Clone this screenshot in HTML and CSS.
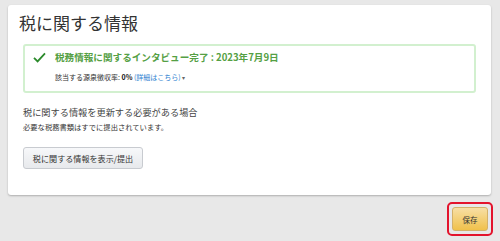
FILE: index.html
```html
<!DOCTYPE html>
<html lang="ja">
<head>
    <meta charset="UTF-8">
    <meta name="viewport" content="width=device-width, initial-scale=1.0">
    <title>税に関する情報</title>
    <link rel="stylesheet" href="styles.css">
</head>
<body>
    <main class="card">
        <h1 class="card-title">税に関する情報</h1>
        <div class="alert-success">
            <svg class="alert-icon" width="13" height="11" viewBox="0 0 13 11">
                <path d="M1 5.8 L4.6 9.4 L12 1.4" fill="none" stroke="#2b8a2b" stroke-width="1.8"/>
            </svg>
            <div class="alert-body">
                <div class="alert-heading">税務情報に関するインタビュー完了 : 2023年7月9日</div>
                <div class="alert-text">該当する源泉徴収率: <b>0%</b> <a href="#" class="link">(詳細はこちら)</a><span class="caret">▾</span></div>
            </div>
        </div>
        <p class="section-title">税に関する情報を更新する必要がある場合</p>
        <p class="section-text">必要な税務書類はすでに提出されています。</p>
        <button type="button" class="btn-secondary">税に関する情報を表示/提出</button>
    </main>
    <div class="footer">
        <div class="highlight">
            <button type="button" class="btn-primary">保存</button>
        </div>
    </div>
</body>
</html>
```

FILE: styles.css
```css
body {
    font-family: "Noto Sans CJK JP", "Liberation Sans", sans-serif;
    margin: 0;
    padding: 0;
    background-color: #e8e8e8;
    color: #333;
}

.card {
    margin: 5px 9px 0 8px;
    padding: 8px 15px 26px;
    background-color: white;
    border-radius: 3px;
    box-shadow: 0 1px 2px rgba(0, 0, 0, 0.25);
}

.card-title {
    margin: 0 0 11px -4px;
    font-size: 17px;
    line-height: 20px;
    font-weight: normal;
    color: #333;
}

.alert-success {
    display: flex;
    gap: 9px;
    height: 45px;
    box-sizing: content-box;
    padding: 0 0 0 8px;
    border: 2px solid #d2f0cf;
    border-radius: 3px;
}

.alert-icon {
    margin-top: 6px;
    flex-shrink: 0;
}

.alert-heading {
    margin-top: 4px;
    font-size: 9.6px;
    line-height: 14px;
    font-weight: bold;
    color: #55a044;
}

.alert-text {
    margin-top: 8px;
    font-size: 7px;
    line-height: 10px;
    color: #333;
}

.alert-text b {
    color: #111;
}

.link {
    color: #2f7fd0;
    text-decoration: none;
}

.caret {
    color: #666;
    font-size: 6px;
    margin-left: 1px;
}

.section-title {
    margin: 12px 0 0;
    font-size: 9.2px;
    line-height: 14px;
    color: #444;
}

.section-text {
    margin: 3px 0 0;
    font-size: 7.3px;
    line-height: 10px;
    color: #333;
}

.btn-secondary {
    display: block;
    margin-top: 15px;
    width: 120px;
    height: 22px;
    padding: 0;
    font-family: inherit;
    font-size: 8.1px;
    color: #333;
    background: linear-gradient(#f7f8fa, #e7e9ec);
    border: 1px solid #c8cbd0;
    border-radius: 3px;
    cursor: pointer;
}

.footer {
    display: flex;
    justify-content: flex-end;
    padding: 7px 7px 0 0;
}

.highlight {
    padding: 3px;
    border: 2px solid #e3142d;
    border-radius: 5px;
}

.btn-primary {
    display: block;
    width: 36px;
    height: 24px;
    padding: 0;
    font-family: inherit;
    font-size: 7.5px;
    color: #333;
    background: linear-gradient(#f7dfa5, #f0c14b);
    border: 1px solid #d4b26a;
    border-radius: 3px;
    cursor: pointer;
}
```
